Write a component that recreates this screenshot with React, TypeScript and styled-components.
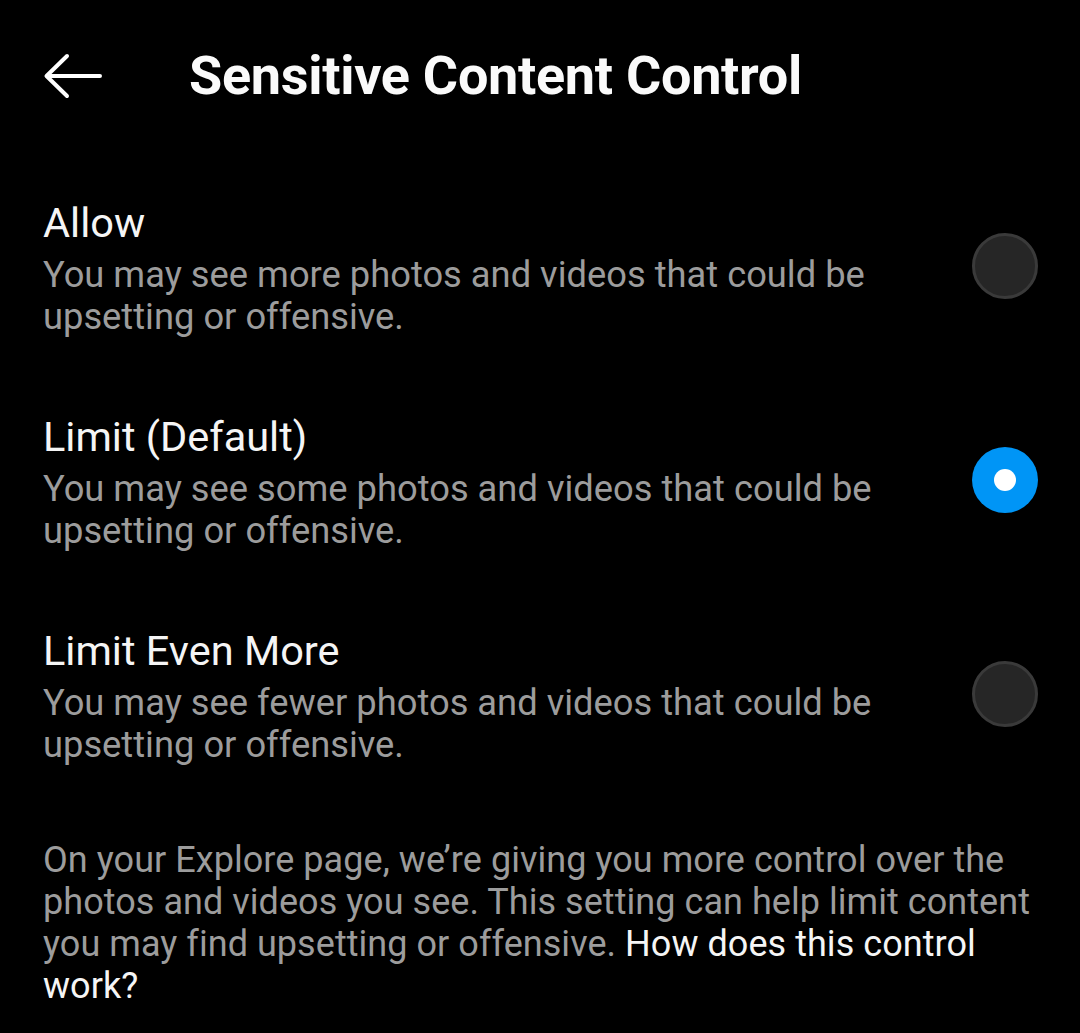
import React, { useState } from "react";
import styled, { createGlobalStyle } from "styled-components";

const Global = createGlobalStyle`
  html, body {
    margin: 0;
    padding: 0;
    background: #000;
  }
  body {
    font-family: Roboto, "Noto Sans", Arial, sans-serif;
    -webkit-font-smoothing: antialiased;
  }
`;

const Screen = styled.div`
  width: 1080px;
  min-height: 1033px;
  background: #000;
  color: #f5f5f5;
  display: flex;
  flex-direction: column;
`;

const Header = styled.header`
  height: 201px;
  box-sizing: border-box;
  display: flex;
  align-items: flex-start;
  padding: 44px 0 0 43px;
`;

const BackButton = styled.button`
  width: 60px;
  height: 64px;
  padding: 0;
  border: 0;
  background: transparent;
  display: flex;
  align-items: center;
  justify-content: flex-start;
  cursor: pointer;
`;

const Title = styled.h1`
  margin: 0 0 0 86px;
  font-size: 54px;
  font-weight: 700;
  line-height: 64px;
  color: #fafafa;
  letter-spacing: -0.3px;
`;

const Options = styled.div`
  display: flex;
  flex-direction: column;
  gap: 77px;
  padding: 0 43px;
`;

const OptionRow = styled.label`
  display: flex;
  align-items: center;
  justify-content: space-between;
  cursor: pointer;
`;

const OptionText = styled.div`
  display: flex;
  flex-direction: column;
`;

const OptionLabel = styled.span`
  font-size: 41.5px;
  line-height: 44px;
  color: #f5f5f5;
  margin-bottom: 9px;
`;

const OptionHint = styled.span`
  font-size: 36.3px;
  line-height: 42px;
  color: #9c9c9c;
  width: 880px;
`;

const Radio = styled.span<{ $checked: boolean }>`
  flex: none;
  width: 66px;
  height: 66px;
  border-radius: 50%;
  box-sizing: border-box;
  margin: 0 -1px 8px 0;
  display: flex;
  align-items: center;
  justify-content: center;
  background: ${(p) => (p.$checked ? "#0095f6" : "#262626")};
  border: ${(p) => (p.$checked ? "none" : "3px solid #3a3a3a")};

  &::after {
    content: "";
    display: ${(p) => (p.$checked ? "block" : "none")};
    width: 22px;
    height: 22px;
    border-radius: 50%;
    background: #fff;
  }
`;

const Footnote = styled.p`
  margin: 73px 0 0;
  padding: 0 40px 0 43px;
  font-size: 36px;
  line-height: 42px;
  color: #9c9c9c;
  letter-spacing: 0.05px;
`;

const Link = styled.a`
  color: #f5f5f5;
  text-decoration: none;
`;

const options = [
  {
    id: "allow",
    label: "Allow",
    hint: "You may see more photos and videos that could be upsetting or offensive.",
  },
  {
    id: "limit",
    label: "Limit (Default)",
    hint: "You may see some photos and videos that could be upsetting or offensive.",
  },
  {
    id: "more",
    label: "Limit Even More",
    hint: "You may see fewer photos and videos that could be upsetting or offensive.",
  },
];

export default function App() {
  const [selected, setSelected] = useState("limit");
  return (
    <Screen>
      <Global />
      <Header>
        <BackButton aria-label="Back">
          <svg width="60" height="50" viewBox="0 0 60 50" fill="none">
            <path
              d="M57 25H5M24 5L3.5 25L24 45"
              stroke="#fff"
              strokeWidth="4"
              strokeLinecap="round"
              strokeLinejoin="round"
            />
          </svg>
        </BackButton>
        <Title>Sensitive Content Control</Title>
      </Header>
      <Options>
        {options.map((o) => (
          <OptionRow key={o.id} onClick={() => setSelected(o.id)}>
            <OptionText>
              <OptionLabel>{o.label}</OptionLabel>
              <OptionHint>{o.hint}</OptionHint>
            </OptionText>
            <Radio $checked={selected === o.id} />
          </OptionRow>
        ))}
      </Options>
      <Footnote>
        On your Explore page, we’re giving you more control over the photos and
        videos you see. This setting can help limit content you may find
        upsetting or offensive. <Link href="#">How does this control work?</Link>
      </Footnote>
    </Screen>
  );
}
